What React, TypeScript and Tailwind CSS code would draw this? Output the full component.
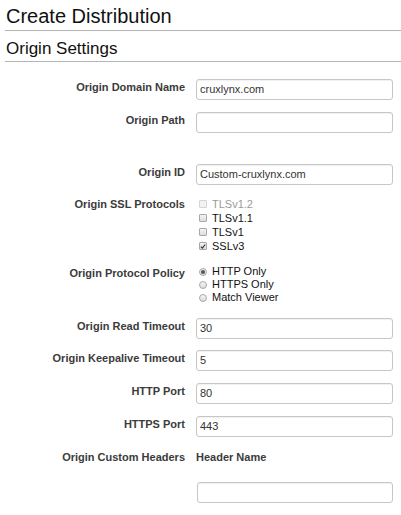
import React from "react";

function Input({ value = "" }: { value?: string }) {
  return (
    <div className="h-[21px] w-[197px] rounded-[3px] border border-[#c6c6c6] bg-white px-[3px] text-[11px] leading-[19px] text-[#333] shadow-[inset_0_1px_1px_rgba(0,0,0,0.06)]">
      {value}
    </div>
  );
}

function Label({ children }: { children: React.ReactNode }) {
  return (
    <div className="w-[185px] shrink-0 pt-[1px] text-right text-[11px] font-bold leading-[15px] text-[#3b3b3b]">
      {children}
    </div>
  );
}

function Row({
  label,
  children,
  className = "",
}: {
  label: string;
  children: React.ReactNode;
  className?: string;
}) {
  return (
    <div className={`flex items-start gap-[11px] ${className}`}>
      <Label>{label}</Label>
      <div>{children}</div>
    </div>
  );
}

function Checkbox({
  label,
  checked = false,
  disabled = false,
}: {
  label: string;
  checked?: boolean;
  disabled?: boolean;
}) {
  return (
    <div className="flex h-[14px] items-center">
      <span
        className={`ml-[3px] mr-[5px] flex h-[8px] w-[8px] items-center justify-center rounded-[1px] border ${
          disabled
            ? "border-[#d4d4d4] bg-[#f2f2f2]"
            : "border-[#a8a8a8] bg-gradient-to-b from-[#f4f4f4] to-[#dcdcdc]"
        }`}
      >
        {checked && (
          <svg width="7" height="7" viewBox="0 0 7 7">
            <path d="M1 3.6 L2.8 5.4 L6 1.2" fill="none" stroke="#333" strokeWidth="1.3" />
          </svg>
        )}
      </span>
      <span className={`text-[11px] leading-[14px] ${disabled ? "text-[#9a9a9a]" : "text-[#111]"}`}>
        {label}
      </span>
    </div>
  );
}

function Radio({ label, checked = false }: { label: string; checked?: boolean }) {
  return (
    <div className="flex h-[13px] items-center">
      <span className="ml-[3px] mr-[5px] flex h-[8px] w-[8px] items-center justify-center rounded-full border border-[#a8a8a8] bg-gradient-to-b from-[#f4f4f4] to-[#dcdcdc]">
        {checked && <span className="h-[4px] w-[4px] rounded-full bg-[#555]" />}
      </span>
      <span className="text-[11px] leading-[13px] text-[#111]">{label}</span>
    </div>
  );
}

export default function App() {
  return (
    <div className="h-[515px] w-[401px] overflow-hidden bg-white font-['Liberation_Sans',Arial,sans-serif] text-[#333]">
      <div className="ml-[5px] border-b border-[#b4b4b4] pb-[4px] pl-[1px] pt-[6px]">
        <h1 className="text-[20px] font-normal leading-[20px] text-[#111]">Create Distribution</h1>
      </div>
      <div className="ml-[5px] mt-[9px] border-b border-[#b4b4b4] pb-[4px] pl-[1px]">
        <h2 className="text-[17px] font-normal leading-[17px] text-[#111]">Origin Settings</h2>
      </div>

      <Row label="Origin Domain Name" className="mt-[17px]">
        <Input value="cruxlynx.com" />
      </Row>
      <Row label="Origin Path" className="mt-[12px]">
        <Input />
      </Row>
      <Row label="Origin ID" className="mt-[31px]">
        <Input value="Custom-cruxlynx.com" />
      </Row>
      <Row label="Origin SSL Protocols" className="mt-[11px]">
        <div className="mt-[1px]">
          <Checkbox label="TLSv1.2" disabled />
          <Checkbox label="TLSv1.1" />
          <Checkbox label="TLSv1" />
          <Checkbox label="SSLv3" checked />
        </div>
      </Row>
      <Row label="Origin Protocol Policy" className="mt-[12px]">
        <div>
          <Radio label="HTTP Only" checked />
          <Radio label="HTTPS Only" />
          <Radio label="Match Viewer" />
        </div>
      </Row>
      <Row label="Origin Read Timeout" className="mt-[14px]">
        <Input value="30" />
      </Row>
      <Row label="Origin Keepalive Timeout" className="mt-[11px]">
        <Input value="5" />
      </Row>
      <Row label="HTTP Port" className="mt-[12px]">
        <Input value="80" />
      </Row>
      <Row label="HTTPS Port" className="mt-[12px]">
        <Input value="443" />
      </Row>
      <Row label="Origin Custom Headers" className="mt-[12px]">
        <div className="pt-[1px] text-[11px] font-bold leading-[15px] text-[#3b3b3b]">Header Name</div>
      </Row>
      <div className="ml-[197px] mt-[17px]">
        <div className="h-[21px] w-[196px] rounded-[3px] border border-[#c6c6c6] bg-white shadow-[inset_0_1px_1px_rgba(0,0,0,0.06)]" />
      </div>
    </div>
  );
}
